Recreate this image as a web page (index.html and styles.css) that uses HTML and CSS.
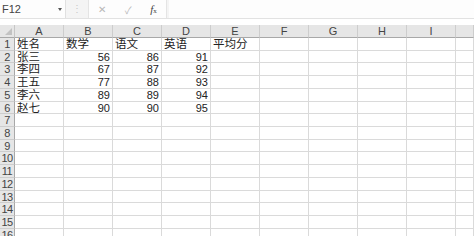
FILE: index.html
```html
<!DOCTYPE html>
<html lang="zh-CN">
<head>
    <meta charset="UTF-8">
    <title>成绩表</title>
    <link rel="stylesheet" href="styles.css">
</head>
<body>
    <div class="formula-bar">
        <div class="name-box">
            <span>F12</span>
            <span class="arrow"></span>
        </div>
        <div class="grip">⋮</div>
        <div class="buttons">
            <span class="btn">✕</span>
            <span class="btn">✓</span>
            <span class="btn fx"><i>f</i><small>x</small></span>
        </div>
        <div class="formula-input"></div>
    </div>

    <div class="sheet" id="sheet"></div>

    <script>
        const columns = ['A', 'B', 'C', 'D', 'E', 'F', 'G', 'H', 'I', ''];
        const rows = [
            ['姓名', '数学', '语文', '英语', '平均分'],
            ['张三', 56, 86, 91],
            ['李四', 67, 87, 92],
            ['王五', 77, 88, 93],
            ['李六', 89, 89, 94],
            ['赵七', 90, 90, 95]
        ];
        const totalRows = 16;
        const sheet = document.getElementById('sheet');

        function addCell(cls, text) {
            const cell = document.createElement('div');
            cell.className = cls;
            if (text !== undefined) cell.textContent = text;
            sheet.appendChild(cell);
        }

        // header row
        addCell('corner');
        columns.forEach(col => addCell('col-head', col));

        for (let r = 0; r < totalRows; r++) {
            addCell('row-head', r + 1);
            const data = rows[r] || [];
            columns.forEach((col, i) => {
                const value = data[i];
                const isNumber = typeof value === 'number';
                addCell(isNumber ? 'cell num' : 'cell', value);
            });
        }
    </script>
</body>
</html>
```

FILE: styles.css
```css
body {
    margin: 0;
    width: 474px;
    height: 236px;
    overflow: hidden;
    background: #fff;
    font-family: "Liberation Sans", "Noto Sans CJK SC", sans-serif;
    color: #222;
}

.formula-bar {
    display: flex;
    height: 18px;
    background: #f4f4f4;
    border-bottom: 1px solid #e2e2e2;
    margin-bottom: 6px;
}

.name-box {
    width: 66px;
    display: flex;
    align-items: center;
    justify-content: space-between;
    padding: 0 3px 0 2px;
    box-sizing: border-box;
    background: #fdfdfd;
    border-right: 1px solid #e0e0e0;
    font-size: 11px;
    color: #444;
}

.arrow {
    width: 0;
    height: 0;
    border-left: 2.5px solid transparent;
    border-right: 2.5px solid transparent;
    border-top: 3px solid #555;
}

.grip {
    width: 22px;
    text-align: center;
    font-size: 10px;
    line-height: 18px;
    color: #c8c8c8;
}

.buttons {
    width: 77px;
    display: flex;
    align-items: center;
    justify-content: space-around;
    background: #fdfdfd;
    border-left: 1px solid #e4e4e4;
    border-right: 1px solid #e4e4e4;
    font-size: 10px;
    color: #b8b8b8;
}

.btn.fx {
    color: #444;
    font-family: "Liberation Serif", serif;
    font-size: 11px;
}

.btn.fx small {
    font-size: 7px;
}

.formula-input {
    flex: 1;
    margin-left: 2px;
    background: #fdfdfd;
}

.sheet {
    display: grid;
    grid-template-columns: 15px repeat(9, 49px) 1fr;
    grid-template-rows: 13px;
    grid-auto-rows: 12.73px;
    font-size: 11.5px;
}

.sheet > div {
    box-sizing: border-box;
    overflow: hidden;
    white-space: nowrap;
    line-height: 13px;
}

.corner {
    position: relative;
    background: #e6e6e6;
    border-right: 1px solid #c6c6c6;
    border-bottom: 1px solid #a8a8a8;
}

.corner::after {
    content: '';
    position: absolute;
    right: 2px;
    bottom: 2px;
    border-left: 7px solid transparent;
    border-bottom: 7px solid #c2c2c2;
}

.col-head {
    background: #e6e6e6;
    border-right: 1px solid #cdcdcd;
    border-bottom: 1px solid #a8a8a8;
    text-align: center;
    color: #444;
    font-size: 11px;
}

.row-head {
    background: #e6e6e6;
    border-right: 1px solid #a8a8a8;
    border-bottom: 1px solid #cdcdcd;
    text-align: center;
    color: #444;
    font-size: 11px;
    letter-spacing: -0.5px;
}

.cell {
    border-right: 1px solid #dadada;
    border-bottom: 1px solid #dadada;
    padding: 0 2px;
}

.cell.num {
    text-align: right;
    font-size: 11px;
}
```
